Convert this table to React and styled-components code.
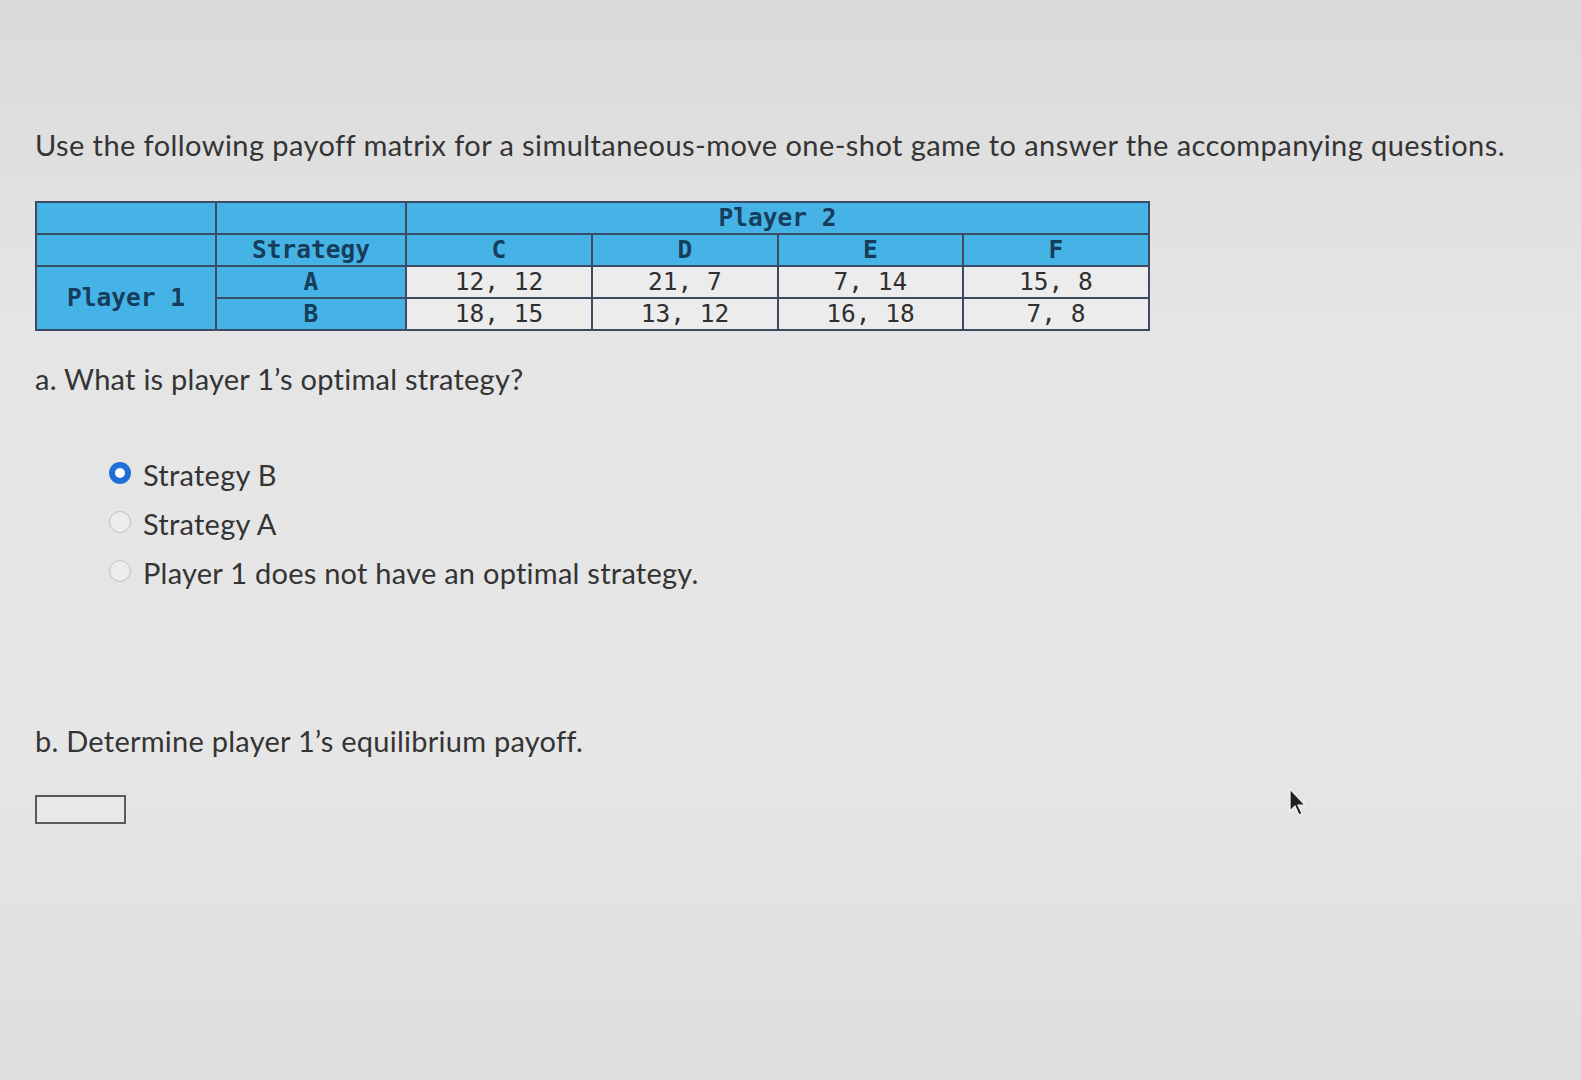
import React from 'react'
import styled, { createGlobalStyle } from 'styled-components'

const GlobalStyle = createGlobalStyle`
  html, body {
    margin: 0;
    padding: 0;
  }
  body {
    background: #e3e3e3;
    font-family: Lato, "Open Sans", sans-serif;
    color: #333;
  }
`

const Page = styled.div`
  position: relative;
  width: 1581px;
  height: 1080px;
  box-sizing: border-box;
  padding: 128px 0 0 35px;
  overflow: hidden;
  background: linear-gradient(180deg, #dadada 0%, #e5e5e5 30%, #e6e6e6 70%, #dedede 100%);
`

const Text = styled.p`
  margin: ${p => p.$mt || 0}px 0 0 0;
  font-size: 29px;
  line-height: 34px;
  color: #343434;
  letter-spacing: ${p => (p.$wide ? 0.42 : 0.25)}px;
`

const Matrix = styled.table`
  margin-top: 39px;
  border-collapse: collapse;
  font-family: "DejaVu Sans Mono", "Liberation Mono", monospace;
  font-size: 24.5px;
  border: 2px solid #3c4b63;
`

const Cell = styled.td`
  width: ${p => p.$w}px;
  height: 30px;
  padding: 0;
  text-align: center;
  border: 2px solid #3c4b63;
  background: ${p => (p.$head ? '#46b3e6' : '#ececec')};
  color: ${p => (p.$head ? '#163e5c' : '#2f2f2f')};
  font-weight: ${p => (p.$head ? 700 : 400)};
  line-height: 28px;
  white-space: pre;
`

const Options = styled.div`
  margin-top: 62px;
  margin-left: 74px;
  display: flex;
  flex-direction: column;
  gap: 15px;
`

const Option = styled.label`
  display: flex;
  align-items: center;
  gap: 12px;
  font-size: 29px;
  line-height: 34px;
  letter-spacing: 0.25px;
  color: #343434;
`

const Radio = styled.span`
  width: 22px;
  height: 22px;
  box-sizing: border-box;
  border-radius: 50%;
  border: ${p => (p.$on ? '6px solid #1f6fd6' : '1.5px solid #c2c2c2')};
  background: ${p => (p.$on ? '#ffffff' : '#ececec')};
  margin-top: -4px;
`

const Answer = styled.div`
  margin-top: 37px;
  width: 91px;
  height: 29px;
  box-sizing: border-box;
  border: 2px solid #5a5a5a;
  background: #e8e8e8;
`

const Pointer = styled.svg`
  position: absolute;
  left: 1288px;
  top: 788px;
`

const widths = [178, 188, 184, 184, 183, 184]

const rows = [
  ['A', '12, 12', '21, 7', '7, 14', '15, 8'],
  ['B', '18, 15', '13, 12', '16, 18', '7, 8'],
]

const choices = [
  { label: 'Strategy B', on: true },
  { label: 'Strategy A', on: false },
  { label: 'Player 1 does not have an optimal strategy.', on: false },
]

const App = () => {
  return (
    <Page>
      <GlobalStyle />
      <Text $wide>
        Use the following payoff matrix for a simultaneous-move one-shot game to answer the accompanying questions.
      </Text>

      <Matrix>
        <tbody>
          <tr>
            <Cell $head $w={widths[0]} />
            <Cell $head $w={widths[1]} />
            <Cell $head colSpan={4}>Player 2</Cell>
          </tr>
          <tr>
            <Cell $head $w={widths[0]} />
            <Cell $head $w={widths[1]}>Strategy</Cell>
            {['C', 'D', 'E', 'F'].map((c, i) => (
              <Cell key={c} $head $w={widths[i + 2]}>{c}</Cell>
            ))}
          </tr>
          {rows.map((r, ri) => (
            <tr key={r[0]}>
              {ri === 0 && (
                <Cell $head rowSpan={2} $w={widths[0]}>Player 1</Cell>
              )}
              <Cell $head $w={widths[1]}>{r[0]}</Cell>
              {r.slice(1).map((v, i) => (
                <Cell key={i} $w={widths[i + 2]}>{v}</Cell>
              ))}
            </tr>
          ))}
        </tbody>
      </Matrix>

      <Text $mt={31}>a. What is player 1’s optimal strategy?</Text>

      <Options>
        {choices.map(c => (
          <Option key={c.label}>
            <Radio $on={c.on} />
            {c.label}
          </Option>
        ))}
      </Options>

      <Text $mt={134}>b. Determine player 1’s equilibrium payoff.</Text>

      <Answer />

      <Pointer width="20" height="30" viewBox="0 0 20 30">
        <path d="M2 1 L2 23 L7 18 L11 27 L14 25.5 L10 17 L17 17 Z" fill="#1e2226" stroke="#f4f4f4" strokeWidth="1.2" />
      </Pointer>
    </Page>
  )
}

export default App
